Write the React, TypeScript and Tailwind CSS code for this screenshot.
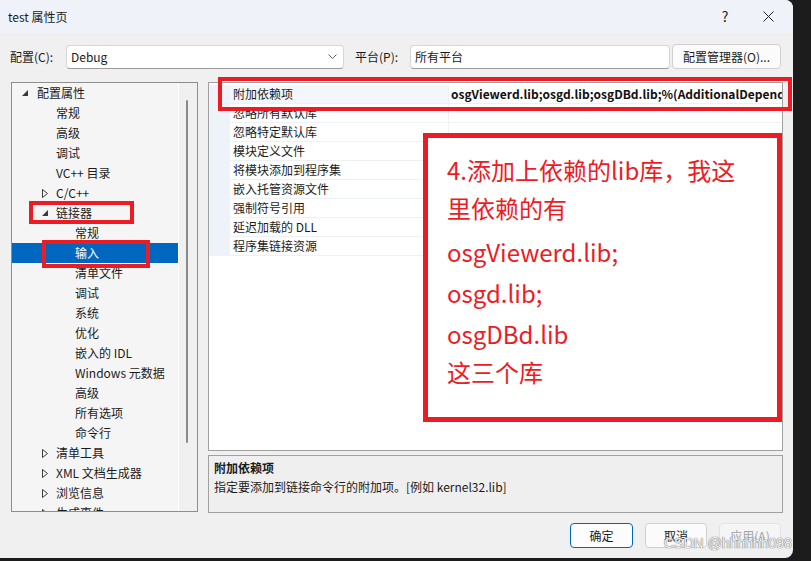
import React from "react";

type TreeNode = { label: string; level: 0 | 1 | 2; arrow?: "open" | "closed"; selected?: boolean };

const tree: TreeNode[] = [
  { label: "配置属性", level: 0, arrow: "open" },
  { label: "常规", level: 1 },
  { label: "高级", level: 1 },
  { label: "调试", level: 1 },
  { label: "VC++ 目录", level: 1 },
  { label: "C/C++", level: 1, arrow: "closed" },
  { label: "链接器", level: 1, arrow: "open" },
  { label: "常规", level: 2 },
  { label: "输入", level: 2, selected: true },
  { label: "清单文件", level: 2 },
  { label: "调试", level: 2 },
  { label: "系统", level: 2 },
  { label: "优化", level: 2 },
  { label: "嵌入的 IDL", level: 2 },
  { label: "Windows 元数据", level: 2 },
  { label: "高级", level: 2 },
  { label: "所有选项", level: 2 },
  { label: "命令行", level: 2 },
  { label: "清单工具", level: 1, arrow: "closed" },
  { label: "XML 文档生成器", level: 1, arrow: "closed" },
  { label: "浏览信息", level: 1, arrow: "closed" },
  { label: "生成事件", level: 1, arrow: "closed" },
];

const props = [
  "附加依赖项",
  "忽略所有默认库",
  "忽略特定默认库",
  "模块定义文件",
  "将模块添加到程序集",
  "嵌入托管资源文件",
  "强制符号引用",
  "延迟加载的 DLL",
  "程序集链接资源",
];

function Arrow({ kind }: { kind?: "open" | "closed" }) {
  if (kind === "open")
    return (
      <svg width="6" height="6" viewBox="0 0 6 6">
        <polygon points="6,0 6,6 0,6" fill="#3a3a3a" />
      </svg>
    );
  if (kind === "closed")
    return (
      <svg width="6" height="9" viewBox="0 0 6 9">
        <polygon points="0.5,0.5 5.5,4.5 0.5,8.5" fill="none" stroke="#3a3a3a" strokeWidth="1" />
      </svg>
    );
  return null;
}

function TreeRow({ node }: { node: TreeNode }) {
  const pad = node.level === 0 ? "pl-[10px]" : node.level === 1 ? "pl-[30px]" : "pl-[63px]";
  return (
    <div
      className={`h-[20px] shrink-0 flex items-center ${pad} ${
        node.selected ? "bg-[#0067c0] text-white" : "text-[#1b1b1b]"
      }`}
    >
      {node.level < 2 && (
        <div className={`${node.level === 0 ? "w-[15px]" : "w-[14px]"} flex items-center`}>
          <Arrow kind={node.arrow} />
        </div>
      )}
      <span className="whitespace-nowrap">{node.label}</span>
    </div>
  );
}

export default function App() {
  return (
    <div className="relative w-[811px] h-[561px] bg-[#1c1c1c] overflow-hidden font-['Noto_Sans_CJK_SC','Noto_Sans',sans-serif] text-[12px]">
      <div className="relative w-[793px] h-[558px] bg-[#f0f0f0] rounded-r-lg overflow-hidden flex flex-col">
        {/* title bar */}
        <div className="h-[33px] shrink-0 bg-[#eff3f9] flex items-center pl-[8px] text-[#1b1b1b]">
          <span className="flex-1">test 属性页</span>
          <span className="w-[14px] text-center text-[14px] mr-[31px]">?</span>
          <svg width="11" height="11" viewBox="0 0 11 11" className="mr-[19px]">
            <path d="M0.5 0.5 L10.5 10.5 M10.5 0.5 L0.5 10.5" stroke="#222" strokeWidth="1" />
          </svg>
        </div>

        {/* config row */}
        <div className="mt-[11px] h-[25px] shrink-0 flex items-center pl-[10px] text-[#1b1b1b]">
          <span className="w-[56px]">配置(C):</span>
          <div className="w-[278px] h-[24px] bg-white border border-[#d6d6d6] border-b-[#9a9a9a] rounded-[4px] flex items-center pl-[4px] pr-[6px]">
            <span className="flex-1">Debug</span>
            <svg width="9" height="5" viewBox="0 0 9 5">
              <polyline points="0.5,0.5 4.5,4.5 8.5,0.5" fill="none" stroke="#606060" strokeWidth="1" />
            </svg>
          </div>
          <span className="ml-[11px] w-[55px]">平台(P):</span>
          <div className="w-[260px] h-[24px] bg-white border border-[#d6d6d6] border-b-[#9a9a9a] rounded-[4px] flex items-center pl-[4px]">
            所有平台
          </div>
          <div className="ml-[2px] w-[109px] h-[25px] bg-[#fbfbfb] border border-[#d0d0d0] rounded-[4px] flex items-center justify-center">
            配置管理器(O)...
          </div>
        </div>

        {/* main area */}
        <div className="mt-[13px] h-[431px] shrink-0 flex pl-[11px] gap-[10px]">
          {/* tree */}
          <div className="w-[187px] h-[430px] border border-[#8e8e8e] bg-[#f5f5f5] flex overflow-hidden">
            <div className="w-[166px] flex flex-col overflow-hidden">
              {tree.map((n, i) => (
                <TreeRow key={i} node={n} />
              ))}
            </div>
            <div className="flex-1 border-l border-white bg-[#f0f0f0] pt-[17px] pl-[7px]">
              <div className="w-[2px] h-[343px] bg-[#8a8a8a] rounded-full" />
            </div>
          </div>

          {/* right column */}
          <div className="w-[575px] flex flex-col gap-[4px]">
            <div className="h-[369px] border border-[#a0a0a0] bg-white pt-[2px] overflow-hidden">
              {props.map((p, i) => (
                <div key={p} className="h-[19px] flex">
                  <div className="w-[21px] bg-[#eef3fa]" />
                  <div
                    className={`w-[219px] pl-[3px] flex items-center border-b border-r border-[#edf0f5] text-[#1b1b1b] whitespace-nowrap ${
                      i === 0 ? "bg-[#f3f6fb]" : ""
                    }`}
                  >
                    {p}
                  </div>
                  <div className="flex-1 min-w-0 pl-[2px] flex items-center border-b border-[#edf0f5] overflow-hidden">
                    {i === 0 && (
                      <span className="font-bold whitespace-nowrap text-[#111]">
                        osgViewerd.lib;osgd.lib;osgDBd.lib;%(AdditionalDependencies)
                      </span>
                    )}
                  </div>
                </div>
              ))}
            </div>
            <div className="h-[58px] border border-[#a0a0a0] bg-[#efefef] pl-[5px] pt-[2px] leading-[19px] text-[#1b1b1b]">
              <div className="font-bold">附加依赖项</div>
              <div>指定要添加到链接命令行的附加项。[例如 kernel32.lib]</div>
            </div>
          </div>
        </div>

        {/* buttons */}
        <div className="mt-[10px] h-[25px] shrink-0 flex justify-end gap-[12px] pr-[12px] text-[#1b1b1b]">
          <div className="w-[63px] h-[25px] bg-[#fdfdfd] border border-[#0067c0] rounded-[4px] flex items-center justify-center">
            确定
          </div>
          <div className="w-[62px] h-[25px] bg-[#fbfbfb] border border-[#d0d0d0] rounded-[4px] flex items-center justify-center">
            取消
          </div>
          <div className="w-[62px] h-[25px] bg-[#f5f5f5] border border-[#e3e3e3] rounded-[4px] flex items-center justify-center text-[#a3a3a3]">
            应用(A)
          </div>
        </div>

        {/* red annotation boxes */}
        <div className="absolute left-[218px] top-[77px] w-[574px] h-[34px] border-[4px] border-[#ed1c24]" />
        <div className="absolute left-[29px] top-[201px] w-[105px] h-[23px] border-[4px] border-[#ed1c24]" />
        <div className="absolute left-[42px] top-[240px] w-[108px] h-[28px] border-[4px] border-[#ed1c24]" />
        <div className="absolute left-[423px] top-[133px] w-[359px] h-[289px] border-[5px] border-[#ed1c24] bg-white pl-[19px] pt-[13px] text-[24px] text-[#ed1c24] whitespace-nowrap">
          <div className="leading-[38px]">4.添加上依赖的lib库，我这</div>
          <div className="leading-[38px]">里依赖的有</div>
          <div className="mt-[4px] leading-[41px]">osgViewerd.lib;</div>
          <div className="leading-[41px]">osgd.lib;</div>
          <div className="leading-[41px]">osgDBd.lib</div>
          <div className="leading-[36px]">这三个库</div>
        </div>
      </div>

      {/* watermark */}
      <div className="absolute left-[664px] top-[533px] text-[14px] font-['Liberation_Sans',sans-serif] text-[#f2f2f2] [text-shadow:0_0_1px_#6f6f6f,0_0_1px_#6f6f6f] whitespace-nowrap">
        CSDN @hhhhhh098
      </div>
    </div>
  );
}
